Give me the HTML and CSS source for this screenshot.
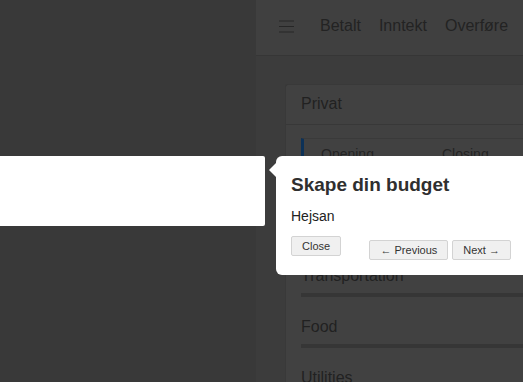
FILE: index.html
```html
<!DOCTYPE html>
<html lang="no">

<head>
    <meta charset="UTF-8">
    <title>Budsjett</title>
    <link rel="stylesheet" href="styles.css">
</head>

<body>
    <div class="app">
        <aside class="sidebar"></aside>
        <div class="main">
            <nav class="navbar">
                <span class="toggler">
                    <svg width="15" height="13" viewBox="0 0 15 13">
                        <path d="M0 1h15M0 6.5h15M0 12h15" stroke="#262626" stroke-width="1.2" fill="none" />
                    </svg>
                </span>
                <ul class="nav-links">
                    <li>Betalt</li>
                    <li>Inntekt</li>
                    <li>Overføre</li>
                </ul>
            </nav>
            <section class="content">
                <div class="card">
                    <div class="card-header">Privat</div>
                    <div class="card-body">
                        <div class="balance">
                            <span>Opening</span>
                            <span>Closing</span>
                        </div>
                        <div class="category">
                            <div class="label">Transportation</div>
                            <div class="bar"></div>
                        </div>
                        <div class="category">
                            <div class="label">Food</div>
                            <div class="bar"></div>
                        </div>
                        <div class="category">
                            <div class="label">Utilities</div>
                            <div class="bar"></div>
                        </div>
                    </div>
                </div>
            </section>
        </div>
    </div>

    <!-- tour: fremhevet element + popover -->
    <div class="tour-highlight"></div>
    <div class="popover">
        <div class="arrow"></div>
        <h3 class="popover-title">Skape din budget</h3>
        <div class="popover-content">Hejsan</div>
        <div class="popover-nav">
            <button class="btn">Close</button>
            <div class="btn-group">
                <button class="btn">&larr; Previous</button>
                <button class="btn">Next &rarr;</button>
            </div>
        </div>
    </div>
</body>

</html>
```

FILE: styles.css
```css
body {
    margin: 0;
    font-family: "Liberation Sans", Arial, sans-serif;
    background-color: #3a3a3a;
    overflow: hidden;
}

.app {
    display: flex;
    height: 382px;
}

.sidebar {
    width: 256px;
    background-color: #393939;
    flex-shrink: 0;
}

.main {
    flex: 1;
    display: flex;
    flex-direction: column;
    background-color: #3c3c3c;
    min-width: 0;
    overflow: hidden;
}

/* 顶部导航 */
.navbar {
    height: 55px;
    flex-shrink: 0;
    border-bottom: 1px solid #363636;
    background-color: #404040;
    display: flex;
    align-items: center;
    padding-left: 23px;
}

.toggler {
    display: flex;
    margin-top: -2px;
}

.nav-links {
    list-style: none;
    margin: 0 0 0 17px;
    padding: 0;
    display: flex;
    white-space: nowrap;
}

.nav-links li {
    font-size: 16px;
    color: #232323;
    padding: 0 9px;
    margin-top: -3px;
}

.content {
    padding: 28px 0 0 29px;
}

.card {
    width: 260px;
    background-color: #414141;
    border: 1px solid #393939;
    border-right: none;
    border-radius: 3px 0 0 3px;
}

.card-header {
    padding: 0 15px;
    height: 39px;
    line-height: 38px;
    font-size: 16px;
    color: #212121;
    border-bottom: 1px solid #383838;
}

.card-body {
    padding: 13px 0 0 15px;
}

.balance {
    height: 40px;
    border-left: 3px solid #0c3157;
    border-top: 1px solid #3a3a3a;
    display: flex;
    padding-left: 17px;
    font-size: 14px;
    color: #242424;
    margin-bottom: 87px;
}

.balance span {
    width: 121px;
    flex-shrink: 0;
    padding-top: 7px;
}

.category {
    margin-bottom: 20px;
}

.category .label {
    font-size: 16px;
    line-height: 20px;
    color: #212121;
    margin-bottom: 7px;
}

.category .bar {
    height: 4px;
    background-color: #363636;
}

/* tour */
.tour-highlight {
    position: absolute;
    left: 0;
    top: 156px;
    width: 265px;
    height: 70px;
    background-color: #fff;
    border-radius: 0 2px 2px 0;
}

.popover {
    position: absolute;
    left: 276px;
    top: 156px;
    width: 262px;
    height: 119px;
    background-color: #fff;
    border-radius: 6px;
    box-sizing: border-box;
    padding: 18px 15px 0 15px;
    color: #333;
}

.popover .arrow {
    position: absolute;
    left: -7px;
    top: 7px;
    width: 0;
    height: 0;
    border-top: 7px solid transparent;
    border-bottom: 7px solid transparent;
    border-right: 7px solid #fff;
}

.popover-title {
    margin: 0;
    font-size: 19px;
    line-height: 22px;
    font-weight: bold;
    color: #2f2f2f;
}

.popover-content {
    font-size: 14px;
    line-height: 18px;
    margin-top: 11px;
    color: #222;
}

.popover-nav {
    display: flex;
    justify-content: space-between;
    align-items: flex-start;
    margin-top: 11px;
    width: 220px;
}

.btn-group {
    display: flex;
    gap: 4px;
    margin-top: 4px;
}

.btn {
    font-family: "Liberation Sans", Arial, sans-serif;
    font-size: 11px;
    height: 20px;
    padding: 0 10px;
    background-color: #f0f0f0;
    border: 1px solid #d3d3d3;
    border-radius: 2px;
    color: #333;
}
```
